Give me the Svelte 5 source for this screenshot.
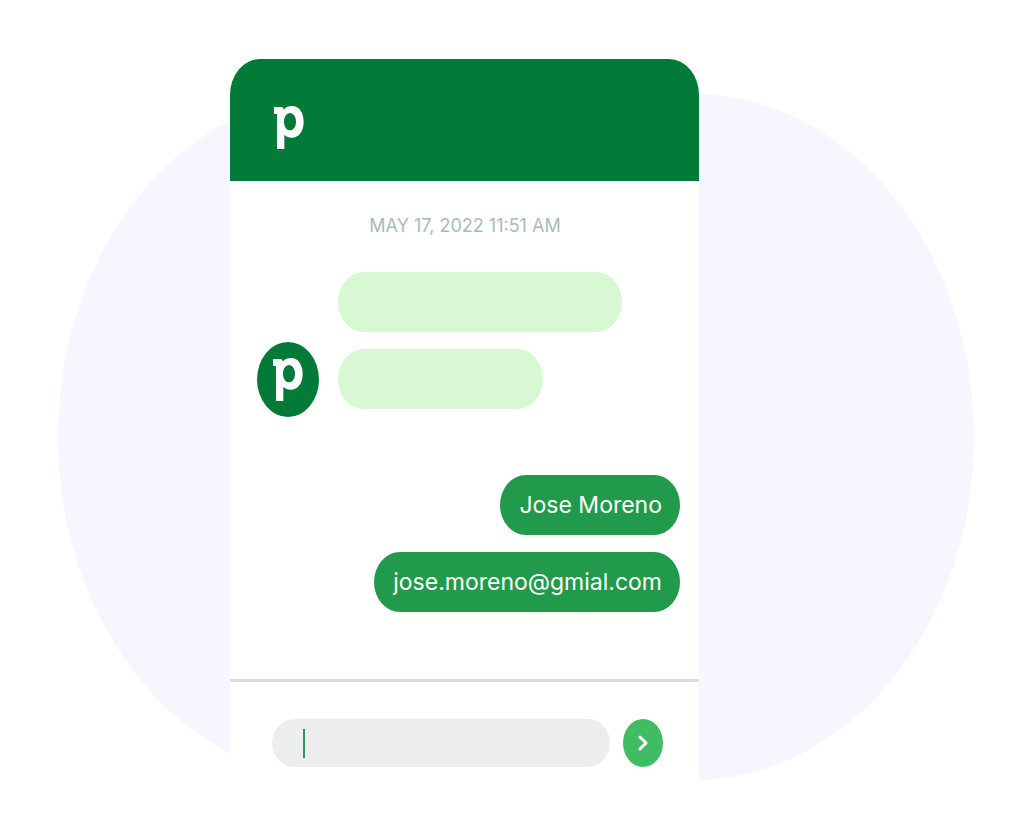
<script>
  let draft = "";
  let placeholders = ["long", "short"];
  let replies = ["Jose Moreno", "jose.moreno@gmial.com"];
</script>

<style>
  :global(body) {
    margin: 0;
    background: #fff;
  }
  .scene {
    padding: 59px 50px 58px 58px;
    font-family: Inter, Roboto, sans-serif;
  }
  .blob {
    display: grid;
    grid-template-columns: 172fr minmax(0, 469fr) 275fr;
    margin-top: 35px;
    border-radius: 280px / 343px;
    background: #f6f6ff;
  }
  .chat {
    grid-column: 2;
    margin-top: -35px;
    border-radius: 30px 30px 0 0 / 36px 36px 0 0;
    background: #fff;
  }
  header {
    padding: 47px 44px 32px;
    border-radius: 30px 30px 0 0 / 36px 36px 0 0;
    background: #047a38;
  }
  svg {
    display: block;
  }
  .logo {
    width: 30px;
    height: 43px;
  }
  .messages {
    display: flex;
    flex-direction: column;
    padding: 32px 19px 67px 27px;
  }
  time {
    margin-bottom: 34px;
    padding-right: 7px;
    color: #a9bcb4;
    font-size: 18px;
    line-height: 25px;
    text-align: center;
  }
  .incoming {
    display: flex;
    align-items: flex-end;
    gap: 19px;
  }
  .avatar {
    display: flex;
    flex-shrink: 0;
    box-sizing: border-box;
    justify-content: center;
    width: 62px;
    height: 75px;
    margin-bottom: -8px;
    padding-top: 16px;
    border-radius: 50%;
    background: #047a38;
  }
  .bubbles {
    display: flex;
    flex: 1;
    flex-direction: column;
    gap: 17px;
  }
  .bubble {
    height: 60px;
    border-radius: 26px / 30px;
    background: #d8f8d4;
  }
  .long {
    width: 83%;
  }
  .short {
    width: 60%;
  }
  .outgoing {
    align-items: flex-end;
    margin-top: 66px;
  }
  .reply {
    box-sizing: border-box;
    padding: 0 18px 0 19px;
    background: #219a4b;
    color: #fff;
    font-size: 23px;
    line-height: 60px;
  }
  form {
    display: flex;
    gap: 13px;
    padding: 37px 36px 13px 42px;
    border-top: 3px solid #dddde1;
  }
  .field {
    display: flex;
    flex: 1;
    align-items: center;
    min-width: 0;
    height: 48px;
    padding: 0 20px 0 31px;
    border-radius: 22px / 24px;
    background: #ebedef;
  }
  .caret {
    width: 2px;
    height: 29px;
    background: #36945a;
  }
  input {
    flex: 1;
    min-width: 0;
    padding: 0;
    border: 0;
    outline: 0;
    background: none;
    color: #047a38;
    font: inherit;
    font-size: 18px;
  }
  button {
    display: flex;
    align-items: center;
    justify-content: center;
    width: 40px;
    height: 48px;
    padding: 0;
    border: 0;
    border-radius: 50%;
    background: #40bd62;
    cursor: pointer;
  }
</style>

{#snippet logo()}
  <svg class="logo" viewBox="0 0 90 129" aria-hidden="true">
    <path
      fill="#fff"
      fill-rule="evenodd"
      d="M0 3H22Q29 3 29 11C36 3 44 0 54 0C76 0 89 20 89 47C89 75 75 95 53 95C44 95 37 92 31 87V129H9V24H0ZM48 21C38 21 30 32 30 47S38 73 48 73S66 62 66 47S58 21 48 21Z" />
  </svg>
{/snippet}

<main class="scene">
  <div class="blob">
    <section class="chat">
      <header>{@render logo()}</header>
      <div class="messages">
        <time datetime="2022-05-17T11:51">MAY 17, 2022 11:51 AM</time>
        <div class="incoming">
          <div class="avatar">{@render logo()}</div>
          <div class="bubbles">
            {#each placeholders as size}
              <div class="bubble {size}"></div>
            {/each}
          </div>
        </div>
        <div class="bubbles outgoing">
          {#each replies as reply}
            <div class="bubble reply">{reply}</div>
          {/each}
        </div>
      </div>
      <form on:submit|preventDefault={() => (draft = "")}>
        <label class="field">
          <span class="caret"></span>
          <input type="text" aria-label="Message" bind:value={draft} />
        </label>
        <button type="submit" aria-label="Send">
          <svg width="10" height="18" viewBox="0 0 10 18" fill="none">
            <path
              d="M2 3L8 9L2 15"
              stroke="#fff"
              stroke-width="3"
              stroke-linecap="round"
              stroke-linejoin="round" />
          </svg>
        </button>
      </form>
    </section>
  </div>
</main>
